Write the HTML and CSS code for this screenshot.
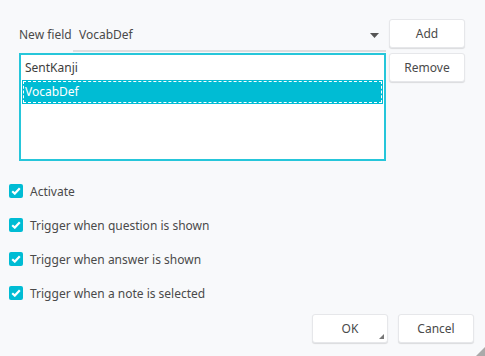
FILE: index.html
```html
<!DOCTYPE html>
<html>
<head>
<meta charset="utf-8">
<link rel="stylesheet" href="styles.css">
</head>
<body>
<div class="dialog">
  <div class="top">
    <div class="left">
      <div class="field-row">
        <span class="label">New field</span>
        <div class="combo">
          <span class="combo-text">VocabDef</span>
          <svg class="arrow" width="9" height="5" viewBox="0 0 9 5"><path d="M0 0H9L4.5 5Z" fill="#555"/></svg>
        </div>
      </div>
      <div class="list">
        <div class="item">SentKanji</div>
        <div class="item selected">VocabDef</div>
      </div>
    </div>
    <div class="side">
      <button class="btn">Add</button>
      <button class="btn">Remove</button>
    </div>
  </div>
  <div class="checks">
    <label class="check"><span class="box"><svg width="10" height="8" viewBox="0 0 10 8"><path d="M1.2 4.2L3.8 6.6L8.8 1.2" fill="none" stroke="#fff" stroke-width="2.2"/></svg></span>Activate</label>
    <label class="check"><span class="box"><svg width="10" height="8" viewBox="0 0 10 8"><path d="M1.2 4.2L3.8 6.6L8.8 1.2" fill="none" stroke="#fff" stroke-width="2.2"/></svg></span>Trigger when question is shown</label>
    <label class="check"><span class="box"><svg width="10" height="8" viewBox="0 0 10 8"><path d="M1.2 4.2L3.8 6.6L8.8 1.2" fill="none" stroke="#fff" stroke-width="2.2"/></svg></span>Trigger when answer is shown</label>
    <label class="check"><span class="box"><svg width="10" height="8" viewBox="0 0 10 8"><path d="M1.2 4.2L3.8 6.6L8.8 1.2" fill="none" stroke="#fff" stroke-width="2.2"/></svg></span>Trigger when a note is selected</label>
  </div>
  <div class="footer">
    <button class="btn default">OK<span class="corner"></span></button>
    <button class="btn">Cancel</button>
  </div>
  <span class="grip"></span>
</div>
</body>
</html>
```

FILE: styles.css
```css
html, body {
  margin: 0;
  padding: 0;
  background: #f8f9fb;
}
.dialog {
  position: relative;
  width: 485px;
  height: 356px;
  box-sizing: border-box;
  padding: 19px 20px 0 9px;
  font-family: "Noto Sans", "Open Sans", sans-serif;
  font-size: 12px;
  color: #4a4a4a;
}
.top {
  display: flex;
  gap: 3px;
}
.left {
  width: 367px;
  margin-left: 10px;
}
.field-row {
  display: flex;
  height: 34px;
  align-items: stretch;
}
.label {
  width: 54px;
  padding-top: 7px;
  box-sizing: border-box;
}
.combo {
  flex: 1;
  display: flex;
  align-items: flex-start;
  justify-content: space-between;
  padding: 7px 7px 0 6px;
  border-bottom: 2px solid #dcdde0;
  margin-bottom: 1px;
}
.arrow {
  margin-top: 7px;
}
.list {
  height: 108px;
  box-sizing: border-box;
  border: 2px solid #26c6da;
  background: #fff;
  padding: 0;
}
.item {
  height: 25px;
  line-height: 25px;
  padding-left: 3px;
  margin: 0 1px;
  color: #3d3d3d;
}
.item.selected {
  background: #00bcd4;
  color: #fff;
  outline: 1px dashed #fff;
  outline-offset: -2px;
  height: 24px;
  line-height: 24px;
}
.side {
  display: flex;
  flex-direction: column;
  gap: 5px;
}
.btn {
  position: relative;
  width: 76px;
  height: 29px;
  box-sizing: border-box;
  background: #fff;
  border: 1px solid #e6e7ea;
  border-radius: 3px;
  box-shadow: 0 1px 1px rgba(0,0,0,0.12);
  font-family: inherit;
  font-size: 12px;
  color: #4a4a4a;
  padding: 0;
}
.checks {
  margin-top: 23px;
  display: flex;
  flex-direction: column;
  gap: 20px;
}
.check {
  display: flex;
  align-items: center;
  gap: 7px;
  height: 14px;
}
.box {
  width: 14px;
  height: 14px;
  border-radius: 2px;
  background: #00bcd4;
  display: flex;
  align-items: center;
  justify-content: center;
}
.footer {
  display: flex;
  justify-content: flex-end;
  gap: 10px;
  margin-top: 14px;
  margin-right: -9px;
}
.corner {
  position: absolute;
  right: 3px;
  bottom: 3px;
  width: 0;
  height: 0;
  border-left: 5px solid transparent;
  border-bottom: 5px solid #777;
}
.grip {
  position: absolute;
  right: 0;
  bottom: 0;
  width: 0;
  height: 0;
  border-left: 9px solid transparent;
  border-bottom: 9px solid #aaa;
}
```
